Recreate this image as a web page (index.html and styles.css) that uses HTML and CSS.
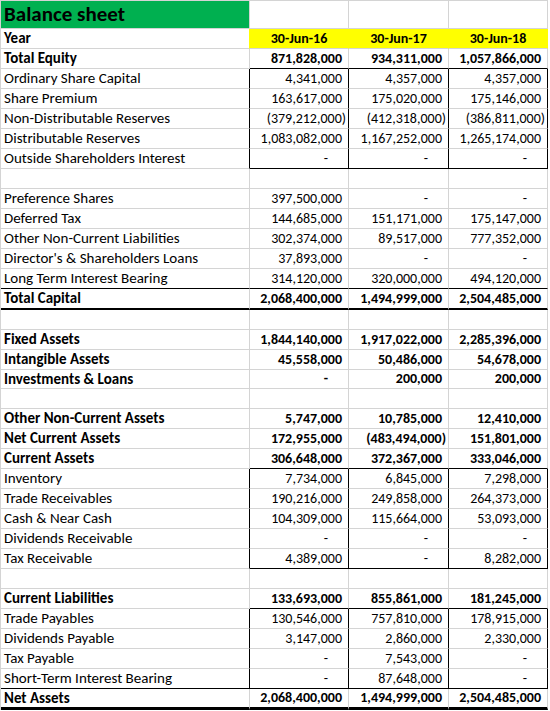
FILE: index.html
```html
<!DOCTYPE html>
<html lang="en">
<head>
<meta charset="utf-8">
<title>Balance sheet</title>
<link rel="stylesheet" href="styles.css">
</head>
<body>
<div class="sheet">
  <div class="row title"><div class="c lab">Balance sheet</div><div class="c"></div><div class="c"></div><div class="c"></div></div>
  <div class="row head b"><div class="c lab">Year</div><div class="c h">30-Jun-16</div><div class="c h">30-Jun-17</div><div class="c h">30-Jun-18</div></div>
  <div class="row b boxtop"><div class="c lab">Total Equity</div><div class="c n">871,828,000</div><div class="c n">934,311,000</div><div class="c n">1,057,866,000</div></div>
  <div class="row box"><div class="c lab">Ordinary Share Capital</div><div class="c n">4,341,000</div><div class="c n">4,357,000</div><div class="c n">4,357,000</div></div>
  <div class="row box"><div class="c lab">Share Premium</div><div class="c n">163,617,000</div><div class="c n">175,020,000</div><div class="c n">175,146,000</div></div>
  <div class="row box"><div class="c lab">Non-Distributable Reserves</div><div class="c n neg">(379,212,000)</div><div class="c n neg">(412,318,000)</div><div class="c n neg">(386,811,000)</div></div>
  <div class="row box"><div class="c lab">Distributable Reserves</div><div class="c n">1,083,082,000</div><div class="c n">1,167,252,000</div><div class="c n">1,265,174,000</div></div>
  <div class="row box boxtop"><div class="c lab">Outside Shareholders Interest</div><div class="c n z">-</div><div class="c n z">-</div><div class="c n z">-</div></div>
  <div class="row"><div class="c lab"></div><div class="c"></div><div class="c"></div><div class="c"></div></div>
  <div class="row"><div class="c lab">Preference Shares</div><div class="c n">397,500,000</div><div class="c n z">-</div><div class="c n z">-</div></div>
  <div class="row"><div class="c lab">Deferred Tax</div><div class="c n">144,685,000</div><div class="c n">151,171,000</div><div class="c n">175,147,000</div></div>
  <div class="row"><div class="c lab">Other Non-Current Liabilities</div><div class="c n">302,374,000</div><div class="c n">89,517,000</div><div class="c n">777,352,000</div></div>
  <div class="row"><div class="c lab">Director's &amp; Shareholders Loans</div><div class="c n">37,893,000</div><div class="c n z">-</div><div class="c n z">-</div></div>
  <div class="row rule"><div class="c lab">Long Term Interest Bearing</div><div class="c n">314,120,000</div><div class="c n">320,000,000</div><div class="c n">494,120,000</div></div>
  <div class="row b thick2"><div class="c lab">Total Capital</div><div class="c n">2,068,400,000</div><div class="c n">1,494,999,000</div><div class="c n">2,504,485,000</div></div>
  <div class="row"><div class="c lab"></div><div class="c"></div><div class="c"></div><div class="c"></div></div>
  <div class="row b"><div class="c lab">Fixed Assets</div><div class="c n">1,844,140,000</div><div class="c n">1,917,022,000</div><div class="c n">2,285,396,000</div></div>
  <div class="row b"><div class="c lab">Intangible Assets</div><div class="c n">45,558,000</div><div class="c n">50,486,000</div><div class="c n">54,678,000</div></div>
  <div class="row b short"><div class="c lab">Investments &amp; Loans</div><div class="c n z">-</div><div class="c n">200,000</div><div class="c n">200,000</div></div>
  <div class="row"><div class="c lab"></div><div class="c"></div><div class="c"></div><div class="c"></div></div>
  <div class="row b"><div class="c lab">Other Non-Current Assets</div><div class="c n">5,747,000</div><div class="c n">10,785,000</div><div class="c n">12,410,000</div></div>
  <div class="row b"><div class="c lab">Net Current Assets</div><div class="c n">172,955,000</div><div class="c n neg">(483,494,000)</div><div class="c n">151,801,000</div></div>
  <div class="row b boxtop"><div class="c lab">Current Assets</div><div class="c n">306,648,000</div><div class="c n">372,367,000</div><div class="c n">333,046,000</div></div>
  <div class="row box"><div class="c lab">Inventory</div><div class="c n">7,734,000</div><div class="c n">6,845,000</div><div class="c n">7,298,000</div></div>
  <div class="row box"><div class="c lab">Trade Receivables</div><div class="c n">190,216,000</div><div class="c n">249,858,000</div><div class="c n">264,373,000</div></div>
  <div class="row box"><div class="c lab">Cash &amp; Near Cash</div><div class="c n">104,309,000</div><div class="c n">115,664,000</div><div class="c n">53,093,000</div></div>
  <div class="row box"><div class="c lab">Dividends Receivable</div><div class="c n z">-</div><div class="c n z">-</div><div class="c n z">-</div></div>
  <div class="row box boxtop"><div class="c lab">Tax Receivable</div><div class="c n">4,389,000</div><div class="c n z">-</div><div class="c n">8,282,000</div></div>
  <div class="row"><div class="c lab"></div><div class="c"></div><div class="c"></div><div class="c"></div></div>
  <div class="row b boxtop"><div class="c lab">Current Liabilities</div><div class="c n">133,693,000</div><div class="c n">855,861,000</div><div class="c n">181,245,000</div></div>
  <div class="row box"><div class="c lab">Trade Payables</div><div class="c n">130,546,000</div><div class="c n">757,810,000</div><div class="c n">178,915,000</div></div>
  <div class="row box"><div class="c lab">Dividends Payable</div><div class="c n">3,147,000</div><div class="c n">2,860,000</div><div class="c n">2,330,000</div></div>
  <div class="row box"><div class="c lab">Tax Payable</div><div class="c n z">-</div><div class="c n">7,543,000</div><div class="c n z">-</div></div>
  <div class="row box rule"><div class="c lab">Short-Term Interest Bearing</div><div class="c n z">-</div><div class="c n">87,648,000</div><div class="c n z">-</div></div>
  <div class="row b thick3"><div class="c lab">Net Assets</div><div class="c n">2,068,400,000</div><div class="c n">1,494,999,000</div><div class="c n">2,504,485,000</div></div>
</div>
</body>
</html>
```

FILE: styles.css
```css
* { box-sizing: border-box; }

html, body {
  margin: 0;
  padding: 0;
  background: #ffffff;
}

.sheet {
  display: grid;
  grid-template-columns: 249px 99px 100px 99px;
  width: 548px;
  border-top: 1px solid #d4d4d4;
  border-left: 1px solid #d4d4d4;
  font-family: "Carlito", "Lato", "Liberation Sans", sans-serif;
  font-size: 15px;
  color: #000000;
}

.row { display: contents; }

.c {
  height: 20px;
  border-right: 1px solid #d4d4d4;
  border-bottom: 1px solid #d4d4d4;
  line-height: 19px;
  padding: 0 3px;
  white-space: nowrap;
  overflow: hidden;
}

.lab { text-align: left; }

.n {
  text-align: right;
  padding-right: 6px;
  font-size: 14px;
}

.n.neg { padding-right: 2px; }
.n.z { padding-right: 20px; }

.b .c { font-weight: 700; }

/* title row */
.title .c {
  height: 28px;
  line-height: 27px;
}

.title .lab {
  background: #00b050;
  font-size: 21px;
  font-weight: 700;
}

/* header row */
.head .h {
  background: #ffff00;
  border-right-color: #ffff00;
  text-align: center;
  font-size: 14px;
}

.head .lab { border-right-color: #ffff00; }

/* boxes */
.box .c { border-right-color: #000000; }
.boxtop .c:not(.lab) { border-bottom-color: #000000; }

/* full-width rules */
.rule .c { border-bottom-color: #000000; }

.thick2 .c {
  height: 21px;
  border-bottom: 2px solid #000000;
}

.thick3 .c {
  height: 21px;
  line-height: 18px;
  border-bottom: 3px solid #000000;
}

.short .c {
  height: 19px;
  line-height: 18px;
}
```
